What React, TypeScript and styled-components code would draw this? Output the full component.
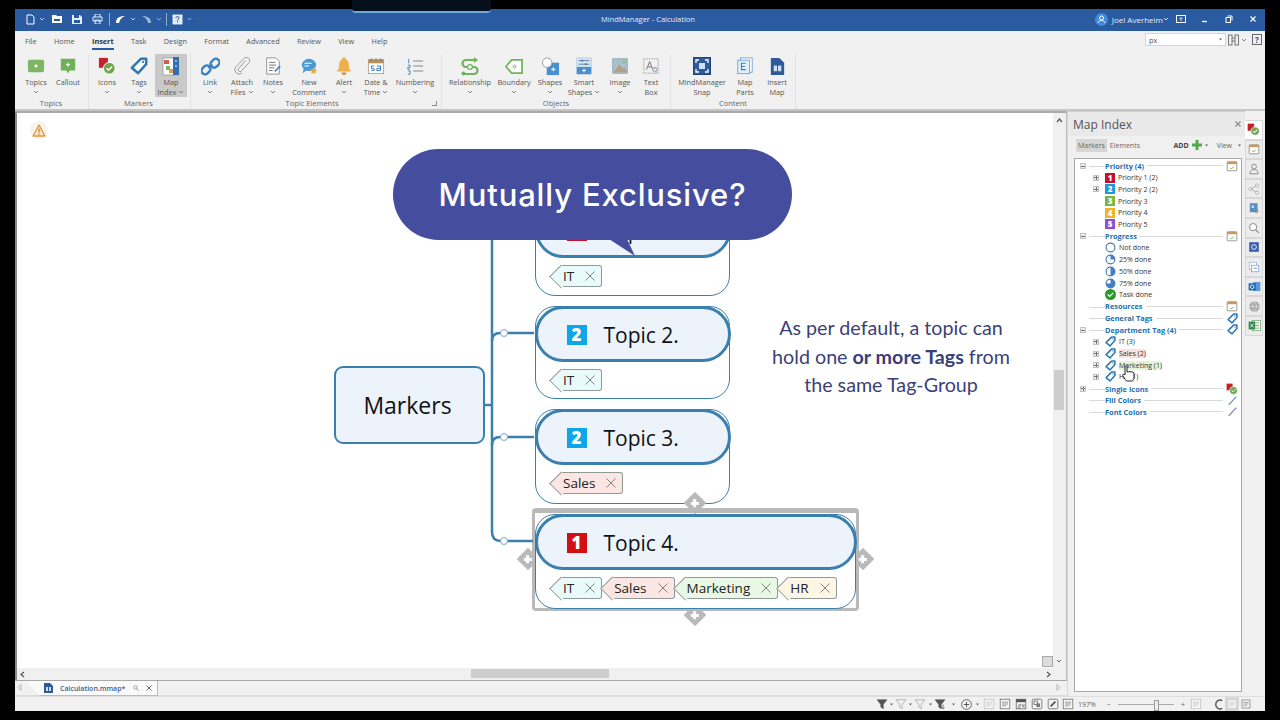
import React from 'react'
import styled, { createGlobalStyle } from 'styled-components'

const GlobalStyle = createGlobalStyle`
  html, body { margin: 0; padding: 0; background: #000; }
  body { font-family: "Open Sans", "Noto Sans", sans-serif; }
  * { box-sizing: border-box; }
`

const BLUE = '#3b7fae'

const Page = styled.div`
  position: relative;
  width: 1280px;
  height: 720px;
  padding: 9px 15px;
  background: #000;
  overflow: hidden;
`

const RecorderEdge = styled.div`
  position: absolute;
  left: 352px;
  top: 0;
  width: 139px;
  height: 12.5px;
  background: #06101c;
  border-bottom: 2px solid #6fa8dc;
  border-radius: 0 0 4px 4px;
`

const HandCursor = styled.svg`
  position: absolute;
  left: 1121px;
  top: 365px;
  width: 14px;
  height: 17px;
`

const Window = styled.div`
  width: 1250px;
  height: 702px;
  display: grid;
  grid-template-rows: 22px 21px 59px 1fr 15px;
  background: #f1f1f1;
`

const TitleBar = styled.div`
  display: grid;
  grid-template-columns: 1fr auto 1fr;
  align-items: center;
  padding-bottom: 2px;
  background: #2a5a9f;
  color: #fff;
`

const Qat = styled.div`
  display: flex;
  align-items: center;
  padding-left: 10px;
  gap: 4px;
`

const QatCell = styled.span<{ $w: number }>`
  display: flex;
  justify-content: center;
  align-items: center;
  width: ${(p) => p.$w}px;
`

const QatSep = styled.span`
  width: 1px;
  height: 13px;
  background: #8fabd0;
`

const WindowTitle = styled.div`
  font-size: 7.5px;
  padding-left: 16px;
  color: #e6edf6;
`

const TitleRight = styled.div`
  display: flex;
  justify-content: flex-end;
  align-items: center;
  font-size: 8px;
`

const UserName = styled.span`
  margin: 0 0 0 4px;
  color: #e6edf6;
  display: flex;
  align-items: center;
`

const WinButton = styled.span`
  width: 24px;
  display: flex;
  justify-content: center;
  align-items: center;
`

const TabStrip = styled.div`
  position: relative;
  display: flex;
  align-items: center;
  gap: 17.4px;
  padding: 0 0 2px 10px;
  font-size: 7.3px;
  color: #555;
`

const Tab = styled.span<{ $active?: boolean }>`
  position: relative;
  font-weight: ${(p) => (p.$active ? 700 : 400)};
  color: ${(p) => (p.$active ? '#333' : '#555')};

  ${(p) =>
    p.$active &&
    `
    &::after {
      content: '';
      position: absolute;
      left: 0;
      right: 0;
      bottom: -4px;
      height: 2px;
      background: #2a5a9f;
    }
  `}
`

const FindBox = styled.div`
  position: absolute;
  top: 2px;
  right: 0;
  display: flex;
  align-items: center;
  gap: 2px;
`

const FindInput = styled.div`
  display: flex;
  justify-content: space-between;
  align-items: center;
  width: 81px;
  height: 13px;
  padding: 0 3px;
  background: #fff;
  border: 1px solid #d6d6d6;
  color: #555;
  font-size: 7.5px;
`

const HelpBox = styled.span`
  width: 10px;
  height: 11px;
  margin: 0 3px;
  border: 1px solid #667;
  color: #445;
  font-size: 8px;
  font-weight: 700;
  line-height: 9px;
  text-align: center;
`

const Ribbon = styled.div`
  display: flex;
  padding: 2px 0 0 3px;
  border-bottom: 2px solid #c6c6c6;
`

const Group = styled.div<{ $w: number }>`
  position: relative;
  display: flex;
  flex-direction: column;
  width: ${(p) => p.$w}px;
  border-right: 1px solid #e3e3e3;
`

const GroupItems = styled.div<{ $pad: number }>`
  display: flex;
  height: 43px;
  padding-left: ${(p) => p.$pad}px;
`

const GroupLabel = styled.div<{ $trim: number }>`
  padding-right: ${(p) => p.$trim}px;
  text-align: center;
  font-size: 7.5px;
  color: #666;
  line-height: 13px;
`

const Launcher = styled.span`
  position: absolute;
  right: 4px;
  bottom: 3px;
  width: 5px;
  height: 5px;
  border-right: 1px solid #888;
  border-bottom: 1px solid #888;
`

const Item = styled.div<{ $w: number; $on?: boolean }>`
  display: flex;
  flex-direction: column;
  align-items: center;
  width: ${(p) => p.$w}px;
  background: ${(p) => (p.$on ? '#c9c9c9' : 'transparent')};
`

const ItemIcon = styled.div`
  display: flex;
  justify-content: center;
  align-items: center;
  height: 24px;
`

const ItemLine = styled.div`
  display: flex;
  align-items: center;
  gap: 2px;
  height: 9.5px;
  font-size: 7.3px;
  line-height: 9.5px;
  color: #555;
  white-space: nowrap;
`

const Body = styled.div`
  display: flex;
  min-height: 0;
`

const LeftColumn = styled.div`
  width: 1052px;
  display: grid;
  grid-template-columns: minmax(0, 1fr) 14px;
  grid-template-rows: minmax(0, 1fr) 12px 16px;
`

const Canvas = styled.div`
  grid-column: 1;
  grid-row: 1;
  position: relative;
  overflow: hidden;
  background: #fff;
  border-left: 2px solid #8a8a8a;
  border-top: 2px solid #a9a9a9;
`

const VScroll = styled.div`
  position: relative;
  grid-column: 2;
  grid-row: 1 / 3;
  background: #f0f0f0;
  border-top: 2px solid #a9a9a9;
  border-right: 1px solid #bbb;
`

const VThumb = styled.div`
  position: absolute;
  left: 1px;
  top: 257px;
  width: 10px;
  height: 40px;
  background: #cdcdcd;
`

const ScrollArrow = styled.span<{ $style: string }>`
  position: absolute;
  ${(p) => p.$style}
  width: 10px;
  height: 10px;
  display: flex;
  justify-content: center;
  align-items: center;
`

const HScroll = styled.div`
  grid-column: 1;
  grid-row: 2;
  position: relative;
  background: #f0f0f0;
  border-left: 2px solid #8a8a8a;
`

const HThumb = styled.div`
  position: absolute;
  left: 454px;
  top: 1px;
  width: 138px;
  height: 9px;
  background: #cdcdcd;
`

const DocTabs = styled.div`
  grid-column: 1 / 3;
  grid-row: 3;
  display: flex;
  align-items: flex-start;
  justify-content: space-between;
  padding: 3px 6px 0 2px;
  background: #f1f1f1;
  border-top: 1px solid #a9a9a9;
  border-bottom: 1px solid #dcdcdc;
  position: relative;
`

const DocTab = styled.div`
  position: absolute;
  left: 11px;
  top: 0;
  display: flex;
  align-items: center;
  height: 15px;
  padding: 0 4px 0 18px;
  gap: 5px;
  background: #fafafa;
  border-right: 1px solid #bbb;
  border-bottom: 1px solid #bbb;
  clip-path: polygon(0 0, 100% 0, 100% 100%, 14px 100%);
  font-size: 7px;
  font-weight: 600;
  color: #3d5f8a;
`

const DocName = styled.span`
  margin: 0 3px 0 2px;
`

const Pane = styled.div`
  width: 178px;
  display: flex;
  flex-direction: column;
  background: #f0f0f0;
  padding: 0 2px 4px 6px;
  border-left: 1px solid #d8d8d8;
`

const PaneHeader = styled.div`
  display: flex;
  justify-content: space-between;
  align-items: center;
  height: 25px;
  margin: 0 -2px 0 -6px;
  padding: 0 3px 0 5px;
  background: #e9e9e9;
  font-size: 12px;
  color: #555;
  border-top: 1px solid #cfcfcf;
`

const PaneTools = styled.div`
  display: flex;
  align-items: center;
  height: 18px;
  margin: 0 0 4px 2px;
  font-size: 7px;
  color: #666;
`

const PaneTab = styled.span<{ $on?: boolean }>`
  padding: 2px 2px;
  margin-right: 1px;
  background: ${(p) => (p.$on ? '#d6d6d6' : 'transparent')};
`

const AddLabel = styled.span`
  margin-left: auto;
  font-weight: 700;
  color: #444;
  margin-right: 3px;
`

const ViewLabel = styled.span`
  margin: 0 3px 0 9px;
`

const Caret = styled.span<{ $l: number; $r?: number }>`
  display: flex;
  margin-left: ${(p) => p.$l}px;
  margin-right: ${(p) => p.$r || 0}px;
`

const IndexList = styled.div`
  flex: 1;
  background: #fff;
  border: 1px solid #a9a9a9;
  padding-top: 1px;
  margin-right: 1px;
`

const Row = styled.div<{ $indent: number }>`
  position: relative;
  display: flex;
  align-items: center;
  height: 11.72px;
  padding-left: ${(p) => p.$indent}px;
  font-size: 7px;
  color: #333;
  gap: 3px;
  white-space: nowrap;
`

const Expander = styled.span<{ $left: number; $plus?: boolean }>`
  position: absolute;
  left: ${(p) => p.$left}px;
  top: 3px;
  width: 6px;
  height: 6px;
  background: #ececec;
  border: 1px solid #c4c4c4;

  &::before {
    content: '';
    position: absolute;
    left: 0;
    top: 1.5px;
    width: 4px;
    height: 1px;
    background: #777;
  }

  ${(p) =>
    p.$plus &&
    `
    &::after {
      content: '';
      position: absolute;
      left: 1.5px;
      top: 0;
      width: 1px;
      height: 4px;
      background: #777;
    }
  `}
`

const SectionRule = styled.span`
  flex: 1;
  height: 1px;
  background: #d8d8d8;
`

const SectionLead = styled.span`
  position: absolute;
  left: 14px;
  width: 16px;
  height: 1px;
  top: 6px;
  background: #d8d8d8;
`

const SectionName = styled.span`
  font-size: 7.4px;
  font-weight: 700;
  color: #1e6fae;
`

const SectionIcon = styled.span`
  display: flex;
  width: 12px;
  margin-right: 3px;
  justify-content: center;
`

const Mark = styled.span<{ $bg: string }>`
  display: inline-flex;
  justify-content: center;
  align-items: center;
  width: 10px;
  height: 10px;
  background: ${(p) => p.$bg};
  color: #fff;
  font-size: 8px;
  font-weight: 800;
  line-height: 1;
`

const TagText = styled.span<{ $bg?: string }>`
  background: ${(p) => p.$bg || 'transparent'};
  line-height: 9px;
`

const SideStrip = styled.div`
  width: 20px;
  display: flex;
  flex-direction: column;
  padding-top: 9px;
  background: #f1f1f1;
`

const SideTab = styled.div<{ $on?: boolean }>`
  display: flex;
  justify-content: center;
  align-items: center;
  width: 18px;
  height: 19.6px;
  background: ${(p) => (p.$on ? '#fff' : '#ececec')};
  border: 1px solid #d8d8d8;
  border-left: ${(p) => (p.$on ? 'none' : '1px solid #d8d8d8')};
`

const StatusBar = styled.div`
  display: flex;
  align-items: center;
  padding-left: 861px;
  background: #f1f1f1;
  border-top: 1px solid #dedede;
  font-size: 7px;
  color: #666;
`

const StatusCell = styled.span<{ $w: number; $on?: boolean }>`
  display: flex;
  justify-content: center;
  align-items: center;
  width: ${(p) => p.$w}px;
  height: 14px;
  background: ${(p) => (p.$on ? '#dadada' : 'transparent')};
`

const SliderTrack = styled.span`
  position: relative;
  width: 56px;
  height: 1px;
  background: #aaa;
  margin: 0 3px;

  &::after {
    content: '';
    position: absolute;
    left: 36px;
    top: -4px;
    width: 3px;
    height: 9px;
    background: #eee;
    border: 1px solid #999;
  }
`

/* diagram parts, placed by page coordinates */
const OX = 17
const OY = 113

const Wires = styled.svg`
  position: absolute;
  left: 0;
  top: 0;
  width: 100%;
  height: 100%;
  pointer-events: none;
`

const Alert = styled.div`
  position: absolute;
  left: ${30 - OX}px;
  top: ${121 - OY}px;
  width: 18px;
  height: 18px;
  display: flex;
  justify-content: center;
  align-items: center;
  border-radius: 9px;
  background: #f6f3f1;
`

const Central = styled.div`
  position: absolute;
  left: ${334 - OX}px;
  top: ${366 - OY}px;
  width: 151px;
  height: 78px;
  display: flex;
  justify-content: center;
  align-items: center;
  padding-right: 4px;
  background: #ecf3fb;
  border: 2px solid ${BLUE};
  border-radius: 9px;
  font-size: 23px;
  color: #111;
`

const TopicBox = styled.div<{ $x: number; $y: number; $w: number; $h: number }>`
  position: absolute;
  left: ${(p) => p.$x - OX}px;
  top: ${(p) => p.$y - OY}px;
  width: ${(p) => p.$w}px;
  height: ${(p) => p.$h}px;
  background: #fff;
  border: 1.5px solid ${BLUE};
  border-radius: 20px;
`

const TopicHead = styled.div`
  display: flex;
  align-items: center;
  height: 56px;
  margin: -1.5px -1.5px 0;
  padding: 2px 0 0 29px;
  gap: 17px;
  background: #ecf3fb;
  border: 3px solid ${BLUE};
  border-radius: 28px;
  font-size: 21px;
  color: #111;
`

const TopicMark = styled.span<{ $bg: string }>`
  display: inline-flex;
  justify-content: center;
  align-items: center;
  width: 20px;
  height: 20px;
  background: ${(p) => p.$bg};
  color: #fff;
  font-size: 17px;
  font-weight: 800;
`

const TagRow = styled.div`
  display: flex;
  gap: 2px;
  padding: 7.5px 0 0 17px;
`

const TagChip = styled.span<{ $bg: string }>`
  position: relative;
  display: flex;
  align-items: center;
  height: 22px;
  margin-left: 8px;
  padding: 0 5px 0 2px;
  gap: 10px;
  background: ${(p) => p.$bg};
  border: 1px solid #8f9a98;
  border-left: none;
  border-radius: 0 3px 3px 0;
  font-size: 13.5px;
  color: #222;

  &::before {
    content: '';
    position: absolute;
    left: -8px;
    top: 2.4px;
    width: 15.5px;
    height: 15.5px;
    background: ${(p) => p.$bg};
    border-left: 1px solid #8f9a98;
    border-bottom: 1px solid #8f9a98;
    transform: rotate(45deg);
  }
`

const TagLabel = styled.span`
  position: relative;
`

const TagClose = styled.svg`
  position: relative;
  width: 12px;
  height: 12px;
`

const Selection = styled.div`
  position: absolute;
  left: ${532 - OX}px;
  top: ${508 - OY}px;
  width: 327px;
  height: 103px;
  border: solid #b9b9b9;
  border-width: 5px 3px 3px;
  border-radius: 4px;
`

const Handle = styled.div<{ $x: number; $y: number }>`
  position: absolute;
  left: ${(p) => p.$x - OX - 8}px;
  top: ${(p) => p.$y - OY - 8}px;
  width: 16px;
  height: 16px;
  background: #b9b9b9;
  transform: rotate(45deg);
  display: flex;
  justify-content: center;
  align-items: center;

  &::before {
    content: '';
    position: absolute;
    width: 8px;
    height: 2.5px;
    background: #fff;
    transform: rotate(45deg);
  }

  &::after {
    content: '';
    position: absolute;
    width: 8px;
    height: 2.5px;
    background: #fff;
    transform: rotate(-45deg);
  }
`

const Callout = styled.div`
  position: absolute;
  left: ${393 - OX}px;
  top: ${149 - OY}px;
  width: 399px;
  height: 91px;
  display: flex;
  justify-content: center;
  align-items: center;
  background: #454e9e;
  border-radius: 46px;
  color: #fff;
  font-family: Inter, "Open Sans", sans-serif;
  font-size: 31px;
  font-weight: 500;
  letter-spacing: 0.85px;
`

const CalloutTail = styled.svg`
  position: absolute;
  left: ${605 - OX}px;
  top: ${239 - OY}px;
  width: 32px;
  height: 18px;
`

const Note = styled.div`
  position: absolute;
  left: ${760 - OX}px;
  top: ${314 - OY}px;
  width: 262px;
  font-family: Lato, "Open Sans", sans-serif;
  font-size: 19.7px;
  line-height: 28.5px;
  text-align: center;
  color: #3b3f78;

  b {
    font-weight: 700;
  }
`

const CornerBox = styled.div`
  position: absolute;
  right: 0;
  bottom: 1px;
  width: 11px;
  height: 11px;
  background: #dcdcdc;
  border: 1px solid #aaa;
`

/* icons */
const Svg = ({ s = 16, h, children }: { s?: number; h?: number; children: React.ReactNode }) => (
  <svg width={s} height={h || s} viewBox='0 0 20 20'>
    {children}
  </svg>
)

const Chev = ({ c = '#777' }: { c?: string }) => (
  <svg width='6' height='4' viewBox='0 0 6 4'>
    <path d='M1 1l2 2 2-2' fill='none' stroke={c} strokeWidth='0.9' />
  </svg>
)

const TagGlyph = ({ s = 11 }: { s?: number }) => (
  <Svg s={s}>
    <path d='M12 2h6v6l-9 10-7-6z' fill='#fff' stroke='#2f78b5' strokeWidth='2.8' strokeLinejoin='round' />
    <circle cx='14.5' cy='5.5' r='1.2' fill='#2f78b5' />
  </Svg>
)

const CalGlyph = () => (
  <Svg s={12}>
    <rect x='2' y='3' width='16' height='15' rx='1' fill='#fff' stroke='#8a8a80' strokeWidth='1.4' />
    <rect x='2' y='3' width='16' height='4' fill='#c99a5a' />
    <path d='M7 13l2 2 4-4' stroke='#5a9a4a' strokeWidth='1.4' fill='none' />
  </Svg>
)

const Pen = () => (
  <Svg s={11}>
    <path d='M3 18L17 3' stroke='#5a86b8' strokeWidth='2' />
    <path d='M3 18l3-5 2 2z' fill='#c99a5a' />
  </Svg>
)

const IconsGlyph = ({ s = 18 }: { s?: number }) => (
  <Svg s={s}>
    <rect x='1' y='1' width='10' height='11' fill='#c8202a' />
    <circle cx='12.5' cy='12.5' r='6.5' fill='#6fa64f' stroke='#fff' strokeWidth='1' />
    <path d='M9.5 12.5l2.2 2.2 4-4' fill='none' stroke='#fff' strokeWidth='1.6' />
  </Svg>
)

const ribbonIcons: Record<string, React.ReactNode> = {
  Topics: (
    <Svg s={18}>
      <rect x='1' y='3' width='18' height='14' rx='2' fill='#7cb564' />
      <rect x='8.5' y='8.5' width='3' height='3' fill='#fff' />
    </Svg>
  ),
  Callout: (
    <Svg s={18}>
      <path d='M2 2h16v13h-6l-2 3-2-3H2z' fill='#6fb05a' />
      <path d='M8 8.5h4M10 6.5v4' stroke='#fff' strokeWidth='1.3' />
    </Svg>
  ),
  Icons: <IconsGlyph />,
  Tags: <TagGlyph s={18} />,
  Map: (
    <svg width='18' height='20' viewBox='0 0 18 20'>
      <rect x='1' y='2' width='15' height='17' fill='#fff' stroke='#999' strokeWidth='0.8' />
      <rect x='11' y='1' width='6' height='18' fill='#2f6fb2' />
      <rect x='2' y='4' width='5' height='4' fill='#d05a50' />
      <rect x='4' y='10' width='4' height='4' fill='#7cb564' />
      <rect x='7' y='13' width='4' height='4' fill='#e0a040' />
      <path d='M13 5h2M13 10h2' stroke='#fff' strokeWidth='1' />
    </svg>
  ),
  Link: (
    <Svg s={19}>
      <path d='M8 12l4-4' stroke='#3b82c4' strokeWidth='2.4' />
      <rect x='11' y='1.5' width='7.5' height='10' rx='3.6' transform='rotate(45 14.7 6.5)' fill='none' stroke='#3b82c4' strokeWidth='2.6' />
      <rect x='1.5' y='8.5' width='7.5' height='10' rx='3.6' transform='rotate(45 5.2 13.5)' fill='none' stroke='#3b82c4' strokeWidth='2.6' />
    </Svg>
  ),
  Attach: (
    <Svg s={18}>
      <path d='M14 5l-8 9a2.2 2.2 0 003 3l9-10a3.6 3.6 0 00-5-5L3 12a5 5 0 007 7' transform='translate(0 -1)' fill='none' stroke='#9a9a9a' strokeWidth='1.1' />
    </Svg>
  ),
  Notes: (
    <Svg s={18}>
      <path d='M3 1h10l4 4v14H3z' fill='#fff' stroke='#888' strokeWidth='1' />
      <path d='M5.5 6h7M5.5 9h8M5.5 12h6M5.5 15h4' stroke='#666' strokeWidth='1' />
      <path d='M12 16l6-6' stroke='#3b82c4' strokeWidth='1.8' />
    </Svg>
  ),
  New: (
    <Svg s={18}>
      <path d='M2 9a8 7 0 1116 0 8 7 0 01-11 6l-4 3 1-5a7 7 0 01-2-4z' fill='#4a9ad6' />
      <path d='M5 7h8M5 10h5' stroke='#fff' strokeWidth='1.2' />
      <path d='M15 11l1.3 2.6 2.7.4-2 2 .5 3-2.5-1.4-2.5 1.4.5-3-2-2 2.7-.4z' fill='#e8a830' />
    </Svg>
  ),
  Alert: (
    <Svg s={20}>
      <path d='M10 1c1.2 0 1.6 1 1.6 2 2.4 1 3.2 3 3.2 6 0 3 .8 5 2.6 6.5H2.6C4.4 14 5.2 12 5.2 9c0-3 .8-5 3.2-6 0-1 .4-2 1.6-2z' fill='#eeb04a' />
      <path d='M7.5 16.5a2.5 2.5 0 005 0z' fill='#d89030' />
    </Svg>
  ),
  Date: (
    <Svg s={18}>
      <rect x='1.5' y='3' width='17' height='15.5' fill='#fff' stroke='#999' strokeWidth='0.9' />
      <rect x='1.5' y='3' width='17' height='4' fill='#b9905a' />
      <path d='M5 1.5v3M10 1.5v3M15 1.5v3' stroke='#777' strokeWidth='1' />
      <path d='M5 15h3v-2H5v-3h3M11 10h4v5h-4v-2.5h4' stroke='#3b82c4' fill='none' strokeWidth='1.1' />
    </Svg>
  ),
  Numbering: (
    <Svg s={18}>
      <path d='M8 4.5h11M8 10h11M8 15.5h11' stroke='#888' strokeWidth='1.2' />
      <path d='M3 2v5M2 9h2.5v2.5H2v2h2.5M2 15.5h2.5v3.5H2' stroke='#3b82c4' strokeWidth='1' fill='none' />
    </Svg>
  ),
  Relationship: (
    <Svg s={20}>
      <path d='M15 4H6a3.5 3.5 0 000 7h8a3.5 3.5 0 010 7H5' fill='none' stroke='#72b25a' strokeWidth='2.2' />
      <path d='M14 1l4 3-4 3z' fill='#72b25a' />
      <circle cx='3.5' cy='17.5' r='2' fill='#72b25a' />
      <circle cx='10' cy='11' r='2.4' fill='#fff' stroke='#72b25a' strokeWidth='1.2' />
    </Svg>
  ),
  Boundary: (
    <Svg s={19}>
      <path d='M18 3v14H7l-6-7 6-7z' fill='#fff' stroke='#72b25a' strokeWidth='1.8' />
      <circle cx='10' cy='10' r='1.5' fill='none' stroke='#72b25a' strokeWidth='1' />
    </Svg>
  ),
  Shapes: (
    <Svg s={19}>
      <rect x='6' y='6' width='13' height='13' fill='#4a90cf' />
      <circle cx='6.5' cy='6' r='5' fill='#fff' stroke='#999' strokeWidth='1' />
      <path d='M11 13h4M13 11v4' stroke='#fff' strokeWidth='1.2' />
    </Svg>
  ),
  Smart: (
    <Svg s={18}>
      <rect x='2' y='1' width='16' height='18' fill='#d7e6f4' stroke='#9fbcd8' strokeWidth='0.6' />
      <path d='M4 4h12M4 8h12' stroke='#557a9c' strokeWidth='1' />
      <rect x='7' y='3' width='2' height='2' fill='#557a9c' />
      <rect x='11' y='7' width='2' height='2' fill='#557a9c' />
      <rect x='2' y='11' width='16' height='8' fill='#4a90cf' />
      <path d='M8 15h4M10 13v4' stroke='#fff' strokeWidth='1.2' />
    </Svg>
  ),
  Image: (
    <Svg s={18}>
      <rect x='2' y='2' width='16' height='16' fill='#a8c0d0' stroke='#7d93a3' strokeWidth='0.8' />
      <path d='M3 17l6-9 4 5 2-2 3 6z' fill='#b59f80' />
      <circle cx='14.5' cy='5.5' r='1.8' fill='#8fc06f' />
    </Svg>
  ),
  Text: (
    <svg width='18' height='18' viewBox='0 0 20 20'>
      <rect x='2' y='2' width='16' height='16' fill='none' stroke='#888' strokeWidth='0.9' strokeDasharray='1.6 1.2' />
      <path d='M5 14l3.5-9L12 14M6.5 11h4' fill='none' stroke='#777' strokeWidth='1.1' />
      <circle cx='14.5' cy='14' r='2.6' fill='#cde' stroke='#69a' strokeWidth='0.8' />
    </svg>
  ),
  MindManager: (
    <Svg s={20}>
      <rect x='1.5' y='1.5' width='17' height='17' fill='#2e5a99' stroke='#1f4478' />
      <path d='M4 7V4h3M13 4h3v3M16 13v3h-3M7 16H4v-3' fill='none' stroke='#fff' strokeWidth='1.3' />
      <rect x='7' y='7' width='6' height='6' fill='#cfe0f4' />
    </Svg>
  ),
  Parts: (
    <Svg s={18}>
      <rect x='5' y='1' width='13' height='16' fill='#fff' stroke='#6da0cf' strokeWidth='1' />
      <rect x='2' y='3.5' width='13' height='15' fill='#e4f0fa' stroke='#6da0cf' strokeWidth='1' />
      <path d='M11 7H6v7h5M6 10.5h4' fill='none' stroke='#3b82c4' strokeWidth='1.2' />
    </Svg>
  ),
  Insert: (
    <Svg s={19}>
      <path d='M3 1h9l5 5v13H3z' fill='#2e5a99' />
      <rect x='6' y='9' width='3.5' height='6' fill='#cfe0f4' />
      <rect x='10.5' y='9' width='3.5' height='6' fill='#cfe0f4' />
    </Svg>
  ),
}

type RibbonItem = { key: string; w: number; lines: string[]; caret?: boolean; on?: boolean }
type RibbonGroup = { label: string; w: number; pad: number; trim: number; launcher?: boolean; items: RibbonItem[] }

const groups: RibbonGroup[] = [
  {
    label: 'Topics',
    w: 71,
    pad: 2,
    trim: 4,
    items: [
      { key: 'Topics', w: 32, lines: ['Topics'], caret: true },
      { key: 'Callout', w: 32, lines: ['Callout'] },
    ],
  },
  {
    label: 'Markers',
    w: 102,
    pad: 2,
    trim: 2,
    items: [
      { key: 'Icons', w: 32, lines: ['Icons'], caret: true },
      { key: 'Tags', w: 32, lines: ['Tags'], caret: true },
      { key: 'Map', w: 32, lines: ['Map', 'Index'], caret: true, on: true },
    ],
  },
  {
    label: 'Topic Elements',
    w: 251,
    pad: 3,
    trim: 8,
    launcher: true,
    items: [
      { key: 'Link', w: 32, lines: ['Link'], caret: true },
      { key: 'Attach', w: 32, lines: ['Attach', 'Files'], caret: true },
      { key: 'Notes', w: 30, lines: ['Notes'], caret: true },
      { key: 'New', w: 42, lines: ['New', 'Comment'] },
      { key: 'Alert', w: 28, lines: ['Alert'], caret: true },
      { key: 'Date', w: 36, lines: ['Date &', 'Time'], caret: true },
      { key: 'Numbering', w: 42, lines: ['Numbering'], caret: true },
    ],
  },
  {
    label: 'Objects',
    w: 229,
    pad: 2,
    trim: 0,
    items: [
      { key: 'Relationship', w: 52, lines: ['Relationship'], caret: true },
      { key: 'Boundary', w: 36, lines: ['Boundary'], caret: true },
      { key: 'Shapes', w: 36, lines: ['Shapes'], caret: true },
      { key: 'Smart', w: 32, lines: ['Smart', 'Shapes'], caret: true },
      { key: 'Image', w: 40, lines: ['Image'], caret: true },
      { key: 'Text', w: 22, lines: ['Text', 'Box'] },
    ],
  },
  {
    label: 'Content',
    w: 125,
    pad: 3,
    trim: 0,
    items: [
      { key: 'MindManager', w: 56, lines: ['MindManager', 'Snap'] },
      { key: 'Parts', w: 30, lines: ['Map', 'Parts'] },
      { key: 'Insert', w: 34, lines: ['Insert', 'Map'] },
    ],
  },
]

const tabs = ['File', 'Home', 'Insert', 'Task', 'Design', 'Format', 'Advanced', 'Review', 'View', 'Help']

const X = () => (
  <TagClose viewBox='0 0 12 12'>
    <path d='M1.5 1.5l9 9M10.5 1.5l-9 9' stroke='#777' strokeWidth='0.9' />
  </TagClose>
)

const Tag = ({ label, bg }: { label: string; bg: string }) => (
  <TagChip $bg={bg}>
    <TagLabel>{label}</TagLabel>
    <X />
  </TagChip>
)

const TAG = { it: '#e9fafa', sales: '#fbe6e3', marketing: '#e9f8e4', hr: '#fdf6e4' }

const Section = ({
  name,
  exp,
  icon,
}: {
  name: string
  exp?: 'open' | 'closed'
  icon: React.ReactNode
}) => (
  <Row $indent={30}>
    {exp && <Expander $left={5} $plus={exp === 'closed'} />}
    <SectionLead />
    <SectionName>{name}</SectionName>
    <SectionRule />
    <SectionIcon>{icon}</SectionIcon>
  </Row>
)

const progress = (frac: number) => {
  if (frac === 0) return null
  const a = frac * 2 * Math.PI
  const x = 10 + 8 * Math.sin(a)
  const y = 10 - 8 * Math.cos(a)
  return <path d={`M10 10V2A8 8 0 ${frac > 0.5 ? 1 : 0} 1 ${x} ${y}z`} fill='#3f80c4' />
}

const Pie = ({ frac }: { frac: number }) => (
  <Svg s={11}>
    <circle cx='10' cy='10' r='8' fill='#fff' stroke='#3f78b4' strokeWidth='2' />
    {progress(frac)}
  </Svg>
)

const sideIcons: React.ReactNode[] = [
  <IconsGlyph s={13} key='a' />,
  <CalGlyph key='b' />,
  <Svg s={12} key='c'>
    <circle cx='10' cy='6' r='4' fill='none' stroke='#888' strokeWidth='1.5' />
    <path d='M3 18c0-5 3-7 7-7s7 2 7 7z' fill='none' stroke='#888' strokeWidth='1.5' />
  </Svg>,
  <Svg s={12} key='d'>
    <path d='M5 10l10-6M5 10l10 6' stroke='#999' strokeWidth='1.2' />
    <circle cx='4' cy='10' r='2.5' fill='#fff' stroke='#888' />
    <circle cx='15' cy='4' r='2.5' fill='#fff' stroke='#888' />
    <circle cx='15' cy='16' r='2.5' fill='#fff' stroke='#888' />
  </Svg>,
  <Svg s={12} key='e'>
    <rect x='3' y='2' width='13' height='15' fill='#5a8fc4' />
    <rect x='6' y='6' width='4' height='4' fill='#cfe0f4' />
    <circle cx='14' cy='15' r='3' fill='none' stroke='#888' />
  </Svg>,
  <Svg s={12} key='f'>
    <circle cx='8.5' cy='8.5' r='6' fill='#fff' stroke='#888' strokeWidth='1.6' />
    <path d='M13 13l5 5' stroke='#888' strokeWidth='2' />
  </Svg>,
  <Svg s={12} key='g'>
    <rect x='2' y='2' width='16' height='16' fill='#3a5fa8' />
    <circle cx='10' cy='10' r='4' fill='none' stroke='#fff' strokeWidth='1.4' />
  </Svg>,
  <Svg s={12} key='h'>
    <rect x='2' y='2' width='12' height='12' fill='#fff' stroke='#7aa3c8' />
    <rect x='6' y='7' width='12' height='11' fill='#fff' stroke='#5a8fc4' />
    <path d='M9 12h6' stroke='#5a8fc4' strokeWidth='1.4' />
  </Svg>,
  <Svg s={13} key='i'>
    <rect x='8' y='3' width='11' height='14' fill='#5a9ad6' />
    <rect x='1' y='5' width='11' height='11' fill='#1f66b0' />
    <circle cx='6.5' cy='10.5' r='2.8' fill='none' stroke='#fff' strokeWidth='1.3' />
  </Svg>,
  <Svg s={13} key='j'>
    <circle cx='10' cy='10' r='8' fill='#a8a8a8' />
    <path d='M2 10h16M10 2c-4 5-4 11 0 16M10 2c4 5 4 11 0 16' fill='none' stroke='#e8e8e8' strokeWidth='1' />
  </Svg>,
  <Svg s={13} key='k'>
    <rect x='7' y='2' width='12' height='16' fill='#fff' stroke='#5a9a5a' />
    <path d='M11 6h6M11 10h6M11 14h6' stroke='#5a9a5a' strokeWidth='1.2' />
    <rect x='1' y='4' width='10' height='12' fill='#2f8a4a' />
    <path d='M3.5 7l5 6M8.5 7l-5 6' stroke='#fff' strokeWidth='1.2' />
  </Svg>,
]

const Funnel = ({ fill, plus }: { fill?: boolean; plus?: boolean }) => (
  <Svg s={12}>
    <path d='M2 3h16l-6 8v7l-4-3v-4z' fill={fill ? '#555' : 'none'} stroke={fill ? '#555' : '#999'} strokeWidth='1.1' />
    {plus && <path d='M15 11v7M12.5 15.500l2.500 2.500 2.500-2.500' stroke='#555' fill='none' strokeWidth='1.3' />}
  </Svg>
)

const Dot = () => (
  <svg width='3' height='3' viewBox='0 0 3 3'>
    <path d='M0 .5h3L1.5 2.5z' fill='#666' />
  </svg>
)

const GreyBox = ({ dark }: { dark?: boolean }) => (
  <Svg s={12}>
    <rect x='2' y='2' width='16' height='16' fill='#f4f4f4' stroke={dark ? '#666' : '#bbb'} strokeWidth='1.2' />
    <path d='M5 7h10M5 10h10M5 13h7' stroke={dark ? '#666' : '#bbb'} strokeWidth='1' />
  </Svg>
)

const StatusCalendar = () => (
  <Svg s={12}>
    <rect x='2' y='2' width='16' height='16' fill='#f4f4f4' stroke='#555' strokeWidth='1.2' />
    <rect x='2' y='2' width='16' height='5' fill='#555' />
    <path d='M6 11h3v2H6v3h3M12 10v4h3M15 10v6' fill='none' stroke='#555' strokeWidth='1' />
  </Svg>
)

const StatusPair = () => (
  <Svg s={12}>
    <rect x='2' y='2' width='16' height='16' rx='2' fill='#f4f4f4' stroke='#555' strokeWidth='1.2' />
    <rect x='5' y='5' width='6' height='6' fill='none' stroke='#555' strokeWidth='1.2' />
    <rect x='9' y='9' width='6' height='6' fill='#777' />
  </Svg>
)

const StatusLink = () => (
  <Svg s={12}>
    <rect x='2' y='2' width='16' height='16' rx='2' fill='#f4f4f4' stroke='#555' strokeWidth='1.2' />
    <path d='M6 14l8-8' stroke='#555' strokeWidth='3' />
  </Svg>
)

const App = () => (
  <Page>
    <GlobalStyle />
    <RecorderEdge />
    <Window>
      <TitleBar>
        <Qat>
          <QatCell $w={10}>
            <svg width='9' height='11' viewBox='0 0 9 11'>
              <path d='M1 1h5l2 2v7H1z' fill='none' stroke='#fff' strokeWidth='1' />
            </svg>
          </QatCell>
          <QatCell $w={6}><Chev c='#cfe0f4' /></QatCell>
          <QatCell $w={16}>
            <svg width='11' height='10' viewBox='0 0 11 10'>
              <path d='M0 1h4l1 1h5v7H0z' fill='#fff' />
              <rect x='2' y='5' width='6' height='2' fill='#2a5a9f' />
            </svg>
          </QatCell>
          <QatCell $w={16}>
            <svg width='10' height='10' viewBox='0 0 10 10'>
              <path d='M0 1h8l2 2v7H0z' fill='#e6edf6' />
              <rect x='2' y='1' width='5' height='3' fill='#2a5a9f' />
              <rect x='2' y='6' width='6' height='3' fill='#2a5a9f' />
            </svg>
          </QatCell>
          <QatCell $w={16}>
            <svg width='11' height='10' viewBox='0 0 11 10'>
              <path d='M3 3V0h5v3M1 3h9v4H1zM3 6h5v4H3z' fill='none' stroke='#e6edf6' strokeWidth='1' />
            </svg>
          </QatCell>
          <QatSep />
          <QatCell $w={12}>
            <svg width='11' height='10' viewBox='0 0 11 10'>
              <path d='M1 9c0-5 3-7 9-7-3 1-5 3-6 7z' fill='#fff' />
            </svg>
          </QatCell>
          <QatCell $w={6}><Chev c='#cfe0f4' /></QatCell>
          <QatCell $w={12}>
            <svg width='11' height='10' viewBox='0 0 11 10'>
              <path d='M10 9c0-5-3-7-9-7 3 1 5 3 6 7z' fill='#9db6d8' />
            </svg>
          </QatCell>
          <QatCell $w={6}><Chev c='#9db6d8' /></QatCell>
          <QatSep />
          <QatCell $w={12}>
            <svg width='11' height='11' viewBox='0 0 11 11'>
              <rect x='1' y='1' width='9' height='9' fill='#dfe7f2' stroke='#fff' strokeWidth='0.8' />
              <path d='M4 4c0-2 3-2 3 0 0 1-1.5 1-1.5 2.5M5.500 7.500v1' fill='none' stroke='#2a4a80' strokeWidth='1' />
            </svg>
          </QatCell>
          <QatCell $w={5}><Chev c='#cfe0f4' /></QatCell>
          <QatCell $w={4}><Dot /></QatCell>
        </Qat>
        <WindowTitle>MindManager - Calculation</WindowTitle>
        <TitleRight>
          <svg width='13' height='13' viewBox='0 0 13 13'>
            <circle cx='6.5' cy='6.5' r='6.5' fill='#3f8ae0' />
            <circle cx='6.5' cy='5' r='2' fill='none' stroke='#fff' strokeWidth='1' />
            <path d='M3 10c.6-2 2-2.5 3.5-2.5S9.400 8 10 10' fill='none' stroke='#fff' strokeWidth='1' />
          </svg>
          <UserName>
            Joel Averheim<Chev c='#e6edf6' />
          </UserName>
          <WinButton>
            <svg width='10' height='9' viewBox='0 0 10 9'>
              <rect x='.5' y='.5' width='9' height='7' fill='none' stroke='#fff' />
              <path d='M5 6V3M3.500 4L5 2.500 6.500 4' fill='none' stroke='#fff' strokeWidth='0.8' />
            </svg>
          </WinButton>
          <WinButton>
            <svg width='8' height='8' viewBox='0 0 8 8'>
              <path d='M1 6.500h5' stroke='#fff' strokeWidth='1.4' />
            </svg>
          </WinButton>
          <WinButton>
            <svg width='8' height='8' viewBox='0 0 8 8'>
              <rect x='1' y='2.500' width='4.500' height='5' fill='none' stroke='#fff' />
              <path d='M2.500 1h4.500v4.500' fill='none' stroke='#fff' />
            </svg>
          </WinButton>
          <WinButton>
            <svg width='8' height='8' viewBox='0 0 8 8'>
              <path d='M1.500 1.500l5 5M6.500 1.500l-5 5' stroke='#fff' strokeWidth='1.2' />
            </svg>
          </WinButton>
        </TitleRight>
      </TitleBar>

      <TabStrip>
        {tabs.map((t) => (
          <Tab key={t} $active={t === 'Insert'}>
            {t}
          </Tab>
        ))}
        <FindBox>
          <FindInput>
            px <Dot />
          </FindInput>
          <svg width='11' height='12' viewBox='0 0 11 12'>
            <rect x='.5' y='1' width='3.500' height='10' fill='none' stroke='#777' />
            <rect x='7' y='1' width='3.500' height='10' fill='none' stroke='#777' />
            <path d='M4 4h3M4 7h3' stroke='#777' />
          </svg>
          <Chev />
          <HelpBox>?</HelpBox>
        </FindBox>
      </TabStrip>

      <Ribbon>
        {groups.map((g) => (
          <Group key={g.label} $w={g.w}>
            <GroupItems $pad={g.pad}>
              {g.items.map((it) => (
                <Item key={it.key} $w={it.w} $on={it.on}>
                  <ItemIcon>{ribbonIcons[it.key]}</ItemIcon>
                  {it.lines.map((l, i) => (
                    <ItemLine key={l}>
                      {l}
                      {it.caret && it.lines.length === 2 && i === 1 && <Chev />}
                    </ItemLine>
                  ))}
                  {it.caret && it.lines.length === 1 && (
                    <ItemLine>
                      <Chev />
                    </ItemLine>
                  )}
                </Item>
              ))}
            </GroupItems>
            <GroupLabel $trim={g.trim}>{g.label}</GroupLabel>
            {g.launcher && <Launcher />}
          </Group>
        ))}
      </Ribbon>

      <Body>
        <LeftColumn>
          <Canvas>
            <Alert>
              <svg width='14' height='13' viewBox='0 0 14 13'>
                <path d='M7 1l6 11H1z' fill='#f8e6c8' stroke='#e2963c' strokeWidth='1.300' strokeLinejoin='round' />
                <path d='M7 4.500v4M7 9.500v1.200' stroke='#c8742a' strokeWidth='1.200' />
              </svg>
            </Alert>

            <Central>Markers</Central>

            <TopicBox $x={535} $y={202} $w={195} $h={93.5}>
              <TopicHead>
                <TopicMark $bg='#c8102e'>1</TopicMark>Topic 1.
              </TopicHead>
              <TagRow>
                <Tag label='IT' bg={TAG.it} />
              </TagRow>
            </TopicBox>

            <TopicBox $x={535} $y={306} $w={195} $h={92.5}>
              <TopicHead>
                <TopicMark $bg='#0ea5e9'>2</TopicMark>Topic 2.
              </TopicHead>
              <TagRow>
                <Tag label='IT' bg={TAG.it} />
              </TagRow>
            </TopicBox>

            <TopicBox $x={535} $y={409} $w={195} $h={94.5}>
              <TopicHead>
                <TopicMark $bg='#0ea5e9'>2</TopicMark>Topic 3.
              </TopicHead>
              <TagRow>
                <Tag label='Sales' bg={TAG.sales} />
              </TagRow>
            </TopicBox>

            <Selection />
            <Handle $x={695} $y={503} />
            <Handle $x={528} $y={559} />
            <Handle $x={863} $y={559} />
            <Handle $x={695} $y={615} />

            <TopicBox $x={535} $y={514} $w={321} $h={94.5}>
              <TopicHead>
                <TopicMark $bg='#d40f14'>1</TopicMark>Topic 4.
              </TopicHead>
              <TagRow>
                <Tag label='IT' bg={TAG.it} />
                <Tag label='Sales' bg={TAG.sales} />
                <Tag label='Marketing' bg={TAG.marketing} />
                <Tag label='HR' bg={TAG.hr} />
              </TagRow>
            </TopicBox>

            <Wires>
              <g transform={`translate(${-OX} ${-OY})`} fill='none' stroke={BLUE} strokeWidth='2.500'>
                <path d='M484 405h8' />
                <path d='M492 232V532q0 9 9 9h32' />
                <path d='M492 341q0-8 8-8h34' />
                <path d='M492 445q0-8 8-8h34' />
                <g fill='#fff' strokeWidth='1' stroke='#7fa9c8'>
                  <circle cx='504' cy='333' r='3.500' />
                  <circle cx='504' cy='437' r='3.500' />
                  <circle cx='504' cy='541' r='3.500' />
                </g>
              </g>
            </Wires>

            <Note>
              As per default, a topic can
              <br />
              hold one <b>or more Tags</b> from
              <br />
              the same Tag-Group
            </Note>

            <CalloutTail viewBox='0 0 32 18'>
              <path d='M4 0l26 17L22 0z' fill='#454e9e' />
            </CalloutTail>
            <Callout>Mutually Exclusive?</Callout>
            <CornerBox />
          </Canvas>

          <VScroll>
            <ScrollArrow $style='left: 1px; top: 2px;'>
              <svg width='7' height='5' viewBox='0 0 7 5'>
                <path d='M1 4l2.500-3L6 4' fill='none' stroke='#555' strokeWidth='1.200' />
              </svg>
            </ScrollArrow>
            <VThumb />
            <ScrollArrow $style='left: 1px; bottom: 14px;'>
              <Chev c='#555' />
            </ScrollArrow>
          </VScroll>

          <HScroll>
            <ScrollArrow $style='left: 0; top: 1px;'>
              <svg width='5' height='7' viewBox='0 0 5 7'>
                <path d='M4 1L1 3.500 4 6' fill='none' stroke='#555' strokeWidth='1.200' />
              </svg>
            </ScrollArrow>
            <HThumb />
            <ScrollArrow $style='right: 0; top: 1px;'>
              <svg width='5' height='7' viewBox='0 0 5 7'>
                <path d='M1 1l3 2.500L1 6' fill='none' stroke='#555' strokeWidth='1.200' />
              </svg>
            </ScrollArrow>
          </HScroll>

          <DocTabs>
            <svg width='5' height='7' viewBox='0 0 5 7'>
              <path d='M4 .5L1 3.500 4 6.500z' fill='none' stroke='#aaa' strokeWidth='0.8' />
            </svg>
            <DocTab>
              <svg width='9' height='10' viewBox='0 0 9 10'>
                <path d='M0 0h6l3 3v7H0z' fill='#2e5a99' />
                <rect x='2' y='4' width='2' height='4' fill='#cfe0f4' />
                <rect x='5' y='4' width='2' height='4' fill='#cfe0f4' />
              </svg>
              <DocName>Calculation.mmap*</DocName>
              <svg width='7' height='7' viewBox='0 0 7 7'>
                <path d='M1 1h3v3H1zM4 4l2 2' fill='none' stroke='#999' strokeWidth='0.800' />
              </svg>
              <svg width='8' height='8' viewBox='0 0 8 8'>
                <path d='M1.500 1.500l5 5M6.500 1.500l-5 5' stroke='#667' strokeWidth='1' />
              </svg>
            </DocTab>
            <svg width='5' height='7' viewBox='0 0 5 7'>
              <path d='M1 .5l3 3-3 3z' fill='none' stroke='#aaa' strokeWidth='0.8' />
            </svg>
          </DocTabs>
        </LeftColumn>

        <Pane>
          <PaneHeader>
            Map Index
            <svg width='8' height='8' viewBox='0 0 8 8'>
              <path d='M1.500 1.500l5 5M6.500 1.500l-5 5' stroke='#888' strokeWidth='1.100' />
            </svg>
          </PaneHeader>
          <PaneTools>
            <PaneTab $on>Markers</PaneTab>
            <PaneTab>Elements</PaneTab>
            <AddLabel>ADD</AddLabel>
            <svg width='10' height='10' viewBox='0 0 10 10'>
              <path d='M3.500 0h3v3.500H10v3H6.500V10h-3V6.500H0v-3h3.500z' fill='#56a84a' />
            </svg>
            <Caret $l={3}><Dot /></Caret>
            <ViewLabel>View</ViewLabel>
            <Caret $l={3} $r={2}><Dot /></Caret>
          </PaneTools>
          <IndexList>
            <Section name='Priority (4)' exp='open' icon={<CalGlyph />} />
            {[
              ['1', '#c8102e', 'Priority 1 (2)'],
              ['2', '#1f9ad6', 'Priority 2 (2)'],
              ['3', '#7ab648', 'Priority 3'],
              ['4', '#f0b429', 'Priority 4'],
              ['5', '#8f4fd0', 'Priority 5'],
            ].map(([n, c, t], i) => (
              <Row key={n} $indent={30}>
                {i < 2 && <Expander $left={18} $plus />}
                <Mark $bg={c}>{n}</Mark>
                <span>{t}</span>
              </Row>
            ))}
            <Section name='Progress' exp='open' icon={<CalGlyph />} />
            {[
              [0, 'Not done'],
              [0.25, '25% done'],
              [0.5, '50% done'],
              [0.75, '75% done'],
            ].map(([f, t]) => (
              <Row key={t as string} $indent={30}>
                <Pie frac={f as number} />
                <span>{t}</span>
              </Row>
            ))}
            <Row $indent={30}>
              <Svg s={11}>
                <circle cx='10' cy='10' r='10' fill='#2a9a2a' />
                <path d='M5 10l3.500 3.500L15 7' fill='none' stroke='#fff' strokeWidth='2.400' />
              </Svg>
              <span>Task done</span>
            </Row>
            <Section name='Resources' icon={<CalGlyph />} />
            <Section name='General Tags' icon={<TagGlyph />} />
            <Section name='Department Tag (4)' exp='open' icon={<TagGlyph />} />
            {[
              ['IT (3)', ''],
              ['Sales (2)', '#fbe0de'],
              ['Marketing (1)', '#e2f5dc'],
              ['HR (1)', ''],
            ].map(([t, bg]) => (
              <Row key={t} $indent={30}>
                <Expander $left={18} $plus />
                <TagGlyph />
                <TagText $bg={bg}>{t}</TagText>
              </Row>
            ))}
            <Section name='Single Icons' exp='closed' icon={<IconsGlyph s={12} />} />
            <Section name='Fill Colors' icon={<Pen />} />
            <Section name='Font Colors' icon={<Pen />} />
          </IndexList>
        </Pane>

        <SideStrip>
          {sideIcons.map((ic, i) => (
            <SideTab key={i} $on={i === 0}>
              {ic}
            </SideTab>
          ))}
        </SideStrip>
      </Body>

      <StatusBar>
        <StatusCell $w={12}><Funnel fill /></StatusCell>
        <StatusCell $w={6}><Dot /></StatusCell>
        <StatusCell $w={13}><Funnel /></StatusCell>
        <StatusCell $w={6}><Dot /></StatusCell>
        <StatusCell $w={14}><Funnel /></StatusCell>
        <StatusCell $w={6}><Dot /></StatusCell>
        <StatusCell $w={14}><Funnel fill plus /></StatusCell>
        <StatusCell $w={12}><Dot /></StatusCell>
        <StatusCell $w={14}>
          <Svg s={13}>
            <circle cx='10' cy='10' r='7.500' fill='none' stroke='#555' strokeWidth='1.300' />
            <path d='M10 6v8M6 10h8' stroke='#555' strokeWidth='1.500' />
          </Svg>
        </StatusCell>
        <StatusCell $w={8}><Dot /></StatusCell>
        <StatusCell $w={16}><GreyBox /></StatusCell>
        <StatusCell $w={16}><GreyBox dark /></StatusCell>
        <StatusCell $w={16}><StatusCalendar /></StatusCell>
        <StatusCell $w={16}><StatusPair /></StatusCell>
        <StatusCell $w={15}><StatusLink /></StatusCell>
        <StatusCell $w={16}><GreyBox dark /></StatusCell>
        <StatusCell $w={22}>197%</StatusCell>
        <StatusCell $w={5} />
        <StatusCell $w={12}>−</StatusCell>
        <SliderTrack />
        <StatusCell $w={12}>+</StatusCell>
        <StatusCell $w={14}><GreyBox /></StatusCell>
        <StatusCell $w={10} />
        <StatusCell $w={12}>
          <Svg s={11}>
            <path d='M15 3a8 8 0 100 14' fill='none' stroke='#555' strokeWidth='2.500' />
          </Svg>
        </StatusCell>
        <StatusCell $w={14} $on><GreyBox /></StatusCell>
        <StatusCell $w={2} />
        <StatusCell $w={10}><GreyBox dark /></StatusCell>
      </StatusBar>
    </Window>
    <HandCursor viewBox='0 0 14 17'>
      <path d='M4 1.500c0-1 2-1 2 0V7c2-.5 6-.5 7 1v4c0 2-1 4-2 4H6c-1 0-2-2-4-5-1-1.500 1-2.500 2-1z' fill='#fff' stroke='#222' strokeWidth='1' />
    </HandCursor>
  </Page>
)

export default App
